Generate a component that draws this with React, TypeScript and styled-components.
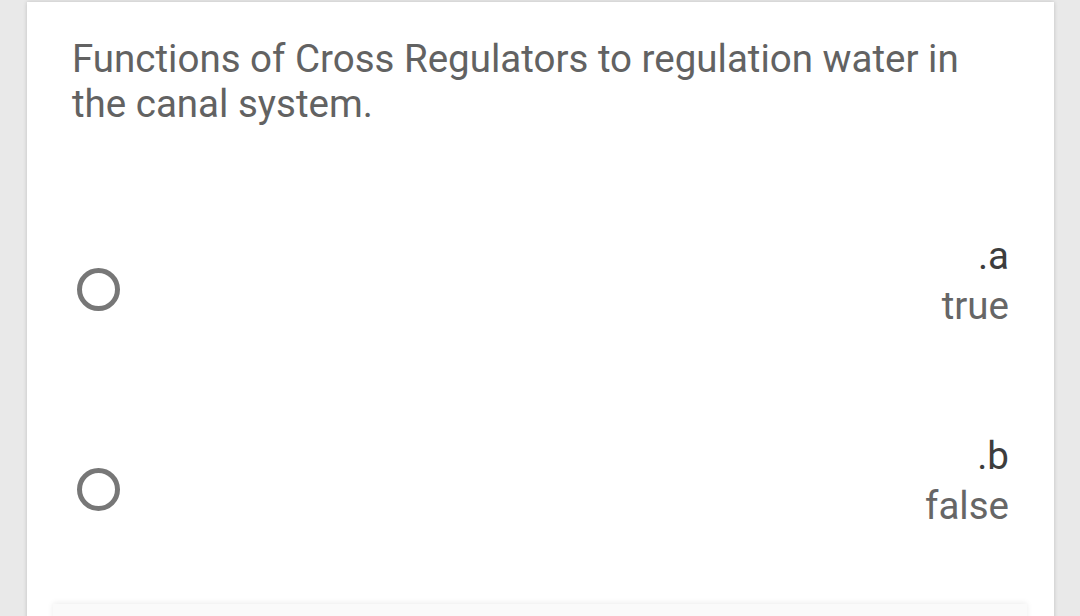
import * as React from 'react';
import styled, { createGlobalStyle } from 'styled-components';

type Choice = {
  letter: string;
  label: string;
};

const choices: Choice[] = [
  { letter: '.a', label: 'true' },
  { letter: '.b', label: 'false' },
];

const GlobalStyle = createGlobalStyle`
  html, body {
    margin: 0;
    padding: 0;
    background: #e9e9e9;
    font-family: Roboto, "Noto Sans", "Liberation Sans", sans-serif;
    overflow: hidden;
  }
`;

const App: React.FC = () => {
  return (
    <>
      <GlobalStyle />
      <Page>
        <Card>
          <Question>
            Functions of Cross Regulators to regulation water in the canal system.
          </Question>
          <Options>
            {choices.map((c) => (
              <OptionRow key={c.letter}>
                <Radio />
                <OptionText>
                  <Letter>{c.letter}</Letter>
                  <Label>{c.label}</Label>
                </OptionText>
              </OptionRow>
            ))}
          </Options>
          <NextBlock />
        </Card>
      </Page>
    </>
  );
};

export default App;

const Page = styled.div`
  width: 1080px;
  height: 616px;
  padding: 2px 26px 0 27px;
  box-sizing: border-box;
  overflow: hidden;
`;

const Card = styled.div`
  background: #fff;
  height: 700px;
  padding: 34px 45px 0 45px;
  box-sizing: border-box;
  box-shadow: 0 0 4px rgba(0, 0, 0, 0.18);
`;

const Question = styled.p`
  margin: 0;
  width: 910px;
  font-size: 38.5px;
  line-height: 45px;
  color: #626262;
`;

const Options = styled.div`
  display: flex;
  flex-direction: column;
  margin-top: 105px;
  gap: 100px;
`;

const OptionRow = styled.div`
  display: flex;
  align-items: center;
  justify-content: space-between;
  height: 100px;
`;

const Radio = styled.span`
  width: 33px;
  height: 33px;
  margin: 17px 0 0 5px;
  border: 5px solid #777;
  border-radius: 50%;
`;

const OptionText = styled.div`
  display: flex;
  flex-direction: column;
  align-items: flex-end;
  font-size: 38.5px;
  line-height: 50px;
`;

const Letter = styled.span`
  color: #3d3d3d;
`;

const Label = styled.span`
  color: #666;
`;

const NextBlock = styled.div`
  margin: 73px -18px 0 -19px;
  height: 80px;
  background: #fafafa;
  box-shadow: 0 -1px 6px rgba(0, 0, 0, 0.08);
`;
